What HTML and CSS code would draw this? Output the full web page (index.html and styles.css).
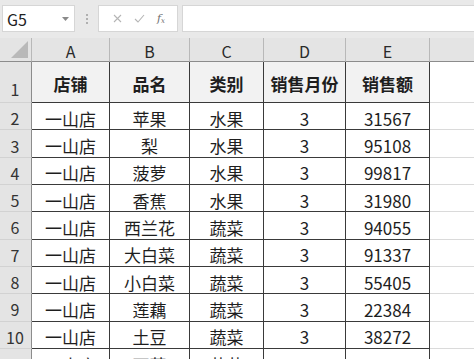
FILE: index.html
```html
<!DOCTYPE html>
<html lang="zh-CN">
<head>
<meta charset="utf-8">
<title>Sheet</title>
<link rel="stylesheet" href="styles.css">
</head>
<body>
<div class="app">
  <div class="toolbar">
    <div class="namebox">
      <span class="ref">G5</span>
      <svg class="dd" width="7" height="4" viewBox="0 0 7 4"><path d="M0 0H7L3.5 4Z" fill="#8a8a8a"/></svg>
    </div>
    <div class="grip"><i></i><i></i><i></i></div>
    <div class="fxbox">
      <svg class="btn" width="9" height="9" viewBox="0 0 9 9"><path d="M1 1L8 8M8 1L1 8" stroke="#b5b5b5" stroke-width="1.1" fill="none"/></svg>
      <svg class="btn" width="11" height="9" viewBox="0 0 11 9"><path d="M1 5L4 8L10 1" stroke="#b5b5b5" stroke-width="1.1" fill="none"/></svg>
      <span class="fx">f<sub>x</sub></span>
    </div>
    <div class="formula"></div>
  </div>

  <div class="sheet">
    <div class="ch corner"><svg width="18" height="17" viewBox="0 0 18 17"><path d="M17 0V17H0Z" fill="#b9b9b9"/></svg></div>
    <div class="ch">A</div><div class="ch">B</div><div class="ch">C</div><div class="ch">D</div><div class="ch">E</div><div class="ch last">F</div>

    <div class="rh rh1">1</div>
    <div class="c hd">店铺</div><div class="c hd">品名</div><div class="c hd">类别</div><div class="c hd">销售月份</div><div class="c hd">销售额</div><div class="g"></div>

    <div class="rh">2</div><div class="c">一山店</div><div class="c">苹果</div><div class="c">水果</div><div class="c">3</div><div class="c">31567</div><div class="g"></div>
    <div class="rh">3</div><div class="c">一山店</div><div class="c">梨</div><div class="c">水果</div><div class="c">3</div><div class="c">95108</div><div class="g"></div>
    <div class="rh">4</div><div class="c">一山店</div><div class="c">菠萝</div><div class="c">水果</div><div class="c">3</div><div class="c">99817</div><div class="g"></div>
    <div class="rh">5</div><div class="c">一山店</div><div class="c">香蕉</div><div class="c">水果</div><div class="c">3</div><div class="c">31980</div><div class="g"></div>
    <div class="rh">6</div><div class="c">一山店</div><div class="c">西兰花</div><div class="c">蔬菜</div><div class="c">3</div><div class="c">94055</div><div class="g"></div>
    <div class="rh">7</div><div class="c">一山店</div><div class="c">大白菜</div><div class="c">蔬菜</div><div class="c">3</div><div class="c">91337</div><div class="g"></div>
    <div class="rh">8</div><div class="c">一山店</div><div class="c">小白菜</div><div class="c">蔬菜</div><div class="c">3</div><div class="c">55405</div><div class="g"></div>
    <div class="rh">9</div><div class="c">一山店</div><div class="c">莲藕</div><div class="c">蔬菜</div><div class="c">3</div><div class="c">22384</div><div class="g"></div>
    <div class="rh">10</div><div class="c">一山店</div><div class="c">土豆</div><div class="c">蔬菜</div><div class="c">3</div><div class="c">38272</div><div class="g"></div>
    <div class="rh">11</div><div class="c">一山店</div><div class="c">西芹</div><div class="c">蔬菜</div><div class="c">3</div><div class="c">78793</div><div class="g"></div>
  </div>
</div>
</body>
</html>
```

FILE: styles.css
```css
* { box-sizing: border-box; }
html, body { margin: 0; padding: 0; background: #fff; }
.app {
  width: 474px;
  height: 359px;
  overflow: hidden;
  font-family: "Noto Sans CJK SC", "Noto Sans", sans-serif;
  color: #1e1e1e;
}
.toolbar {
  height: 38px;
  background: #e9e9e9;
  display: flex;
  align-items: flex-start;
  padding: 5px 0 0 2px;
}
.namebox {
  width: 73px;
  height: 27px;
  background: #fff;
  border: 1px solid #d6d6d6;
  display: flex;
  align-items: center;
  justify-content: space-between;
  padding: 0 5px 0 4px;
}
.ref { font-size: 16px; color: #222; line-height: 1; }
.grip {
  width: 23px;
  height: 27px;
  display: flex;
  flex-direction: column;
  align-items: center;
  justify-content: center;
  gap: 2px;
}
.grip i { display: block; width: 2px; height: 2px; background: #b0b0b0; }
.fxbox {
  width: 80px;
  height: 27px;
  background: #fff;
  border: 1px solid #d6d6d6;
  display: flex;
  align-items: center;
  justify-content: space-around;
  padding: 0 6px 0 8px;
}
.fx {
  font-family: "DejaVu Serif", "Liberation Serif", serif;
  font-style: italic;
  font-size: 11px;
  color: #6e6e6e;
}
.fx sub { font-size: 7px; vertical-align: -1px; }
.formula {
  flex: 1;
  height: 27px;
  margin-left: 4px;
  background: #fff;
  border: 1px solid #d6d6d6;
  border-right: none;
}
.sheet {
  display: grid;
  grid-template-columns: 32px 78px 80px 74px 82px 84px 64px;
  grid-template-rows: 24px 41px repeat(10, 27.33px);
}
.ch {
  background: #e4e4e4;
  border-right: 1px solid #b8b8b8;
  border-bottom: 1px solid #8c8c8c;
  display: flex;
  align-items: center;
  justify-content: center;
  font-size: 16px;
  color: #2a2a2a;
  padding-top: 2px;
}
.ch.last { justify-content: flex-end; border-right: none; margin-right: -4px; }
.corner { align-items: flex-end; justify-content: flex-end; padding: 0 2px 3px 0; }
.rh {
  background: #e4e4e4;
  border-right: 1px solid #8c8c8c;
  border-bottom: 1px solid #d2d2d2;
  display: flex;
  align-items: center;
  justify-content: center;
  font-size: 16px;
  color: #333;
  padding: 4px 1px 0 0;
}
.rh1 { align-items: flex-end; padding-bottom: 1px; }
.c {
  border-right: 1px solid #3a3a3a;
  border-bottom: 1px solid #3a3a3a;
  display: flex;
  align-items: center;
  justify-content: center;
  font-size: 17px;
  color: #1e1e1e;
  padding-top: 4px;
  white-space: nowrap;
}
.hd {
  background: #f2f2f2;
  font-weight: 700;
  padding-top: 3px;
}
.g {
  border-bottom: 1px solid #dadada;
}
```
